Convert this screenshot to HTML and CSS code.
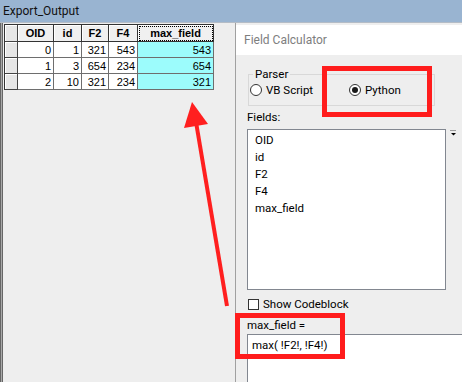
FILE: index.html
```html
<!DOCTYPE html>
<html>
<head>
<meta charset="utf-8">
<link rel="stylesheet" href="styles.css">
</head>
<body>
<div class="titlebar">Export_Output</div>
<div class="main">
  <div class="left">
    <table class="grid">
      <tr>
        <th class="sel"></th><th class="c-oid">OID</th><th class="c-id">id</th><th class="c-f2">F2</th><th class="c-f4">F4</th><th class="c-max focus"><span>max_field</span></th>
      </tr>
      <tr>
        <td class="sel"></td><td>0</td><td>1</td><td>321</td><td>543</td><td class="hl">543</td>
      </tr>
      <tr>
        <td class="sel"></td><td>1</td><td>3</td><td>654</td><td>234</td><td class="hl">654</td>
      </tr>
      <tr>
        <td class="sel"></td><td>2</td><td>10</td><td>321</td><td>234</td><td class="hl">321</td>
      </tr>
    </table>
  </div>
  <div class="right">
    <div class="dlg-title">Field Calculator</div>
    <div class="dlg-body">
      <fieldset class="parser">
        <legend>Parser</legend>
        <div class="radios">
          <div class="radio"><span class="circle"></span><span>VB Script</span></div>
          <div class="radio"><span class="circle on"><span class="dot"></span></span><span>Python</span></div>
        </div>
      </fieldset>
      <div class="label fields-label">Fields:</div>
      <div class="list-row">
        <div class="list">
          <div>OID</div>
          <div>id</div>
          <div>F2</div>
          <div>F4</div>
          <div>max_field</div>
        </div>
        <svg class="dd" width="7" height="7" viewBox="0 0 7 7"><rect x="0" y="0" width="6" height="1" fill="#9a9a9a"/><polygon points="1,3 6,3 3.5,5.5" fill="#000"/></svg>
      </div>
      <div class="check-row"><span class="checkbox"></span><span>Show Codeblock</span></div>
      <div class="label expr-label">max_field =</div>
      <div class="expr">max( !F2!, !F4!)</div>
    </div>
  </div>
</div>
<div class="mark mark-python"></div>
<div class="mark mark-expr"></div>
<svg class="arrow" width="462" height="382" viewBox="0 0 462 382">
  <line x1="227" y1="306" x2="196" y2="122" stroke="#ff1f1f" stroke-width="4"/>
  <polygon points="192,102 184,128 208,124" fill="#ff1f1f"/>
</svg>
</body>
</html>
```

FILE: styles.css
```css
body {
  margin: 0;
  width: 462px;
  height: 382px;
  overflow: hidden;
  background: #eeeeee;
  position: relative;
  font-family: Roboto, "Liberation Sans", sans-serif;
  color: #000;
}

.titlebar {
  height: 22px;
  background: #99b4d1;
  padding-left: 3px;
  font-size: 12px;
  line-height: 22px;
  color: #111;
}

.main {
  display: flex;
  height: 359px;
  border-top: 1px solid #b4bcc6;
}

.left {
  width: 231px;
  flex: none;
  border-left: 1px solid #666;
  box-shadow: inset 1px 0 #a8a8a8, inset 2px 0 #666;
  padding: 1px 0 0 3px;
}

.grid {
  border-collapse: separate;
  border-spacing: 0;
  table-layout: fixed;
  border-top: 1px solid #333;
  border-left: 1px solid #333;
  font-family: "Liberation Sans", Arial, sans-serif;
  font-size: 11px;
}

.grid th, .grid td {
  box-sizing: border-box;
  padding: 0 2px;
  line-height: 14px;
  border-right: 1px solid #6e6e6e;
  border-bottom: 1px solid #6e6e6e;
  text-align: right;
  white-space: nowrap;
  background: #fff;
}

.grid th {
  height: 17px;
  background: #f0f0f0;
  font-weight: bold;
  text-align: center;
  border-right-color: #333;
  border-bottom-color: #333;
  box-shadow: inset 1px 1px #fff;
}

.grid td {
  height: 16px;
}

.grid .sel {
  width: 13px;
  background: #e6e6e6;
  box-shadow: inset 1px 1px #fff;
  border-right-color: #444;
  border-bottom-color: #444;
}

.c-oid { width: 36px; }
.c-id { width: 28px; }
.c-f2 { width: 27px; }
.c-f4 { width: 29px; }
.c-max { width: 76px; }

.grid .focus {
  outline: 1px dotted #000;
  outline-offset: -2px;
}

.grid td.hl {
  background: #9cfcfc;
}

.right {
  flex: 1;
  border-left: 1px solid #a0a0a0;
  padding-top: 2px;
  display: flex;
  flex-direction: column;
  font-size: 11.5px;
}

.dlg-title {
  height: 30px;
  flex: none;
  background: #fff;
  padding-left: 8px;
  font-size: 12px;
  line-height: 31px;
  color: #7e7e7e;
}

.dlg-body {
  padding-left: 11px;
}

.parser {
  margin: 12px 0 0 1px;
  width: 187px;
  box-sizing: border-box;
  border: 1px solid #d8d8d8;
  padding: 1px 0 7px 1px;
}

.parser legend {
  padding: 0 2px;
  margin-left: 3px;
  line-height: 14px;
}

.radios {
  display: grid;
  grid-template-columns: 99px auto;
  line-height: 16px;
}

.radio {
  display: flex;
  align-items: center;
  gap: 4px;
}

.circle {
  width: 12px;
  height: 12px;
  box-sizing: border-box;
  border: 1px solid #333;
  border-radius: 50%;
  background: #fff;
  display: flex;
  align-items: center;
  justify-content: center;
}

.dot {
  width: 6px;
  height: 6px;
  border-radius: 50%;
  background: #1a1a1a;
}

.label {
  line-height: 14px;
}

.fields-label {
  margin-top: 4px;
}

.list-row {
  display: flex;
  align-items: flex-start;
  margin-top: 5px;
}

.list {
  width: 199px;
  height: 161px;
  box-sizing: border-box;
  border: 1px solid #828790;
  background: #fff;
  padding: 2px 0 0 7px;
  line-height: 17px;
}

.dd {
  margin: 1px 0 0 4px;
}

.check-row {
  display: flex;
  align-items: center;
  gap: 4px;
  margin-top: 7px;
  line-height: 15px;
}

.checkbox {
  width: 11px;
  height: 11px;
  box-sizing: border-box;
  margin-left: 1px;
  border: 1px solid #333;
  background: #fff;
}

.expr-label {
  margin-top: 6px;
}

.expr {
  margin-top: 2px;
  width: 230px;
  height: 60px;
  box-sizing: border-box;
  border: 1px solid #828790;
  border-right: none;
  background: #fff;
  padding: 3px 0 0 4px;
  line-height: 14px;
}

.mark {
  position: absolute;
  box-sizing: border-box;
  border: 5px solid #ff1c1c;
}

.mark-python {
  left: 322px;
  top: 66px;
  width: 110px;
  height: 51px;
}

.mark-expr {
  left: 235px;
  top: 313px;
  width: 110px;
  height: 46px;
}

.arrow {
  position: absolute;
  left: 0;
  top: 0;
  pointer-events: none;
}
```
